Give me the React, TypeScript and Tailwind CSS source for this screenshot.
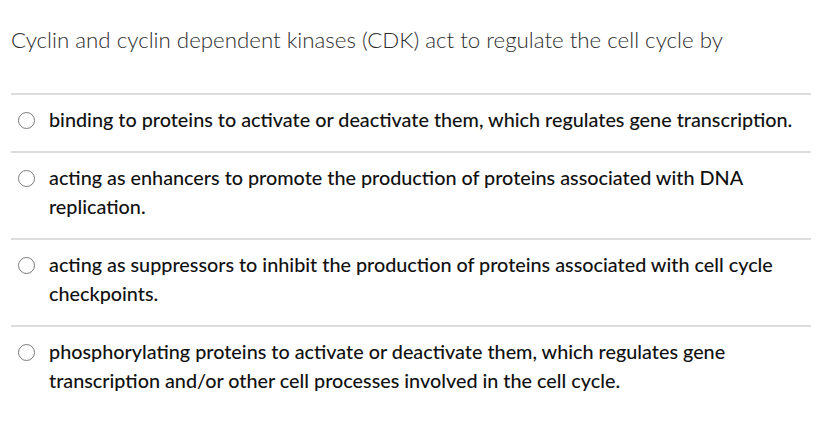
import React from 'react';

const options = [
  'binding to proteins to activate or deactivate them, which regulates gene transcription.',
  'acting as enhancers to promote the production of proteins associated with DNA replication.',
  'acting as suppressors to inhibit the production of proteins associated with cell cycle checkpoints.',
  'phosphorylating proteins to activate or deactivate them, which regulates gene transcription and/or other cell processes involved in the cell cycle.',
];

const App: React.FC = () => {
  return (
    <div className="min-h-screen bg-white" style={{ fontFamily: 'Lato, "Noto Sans", sans-serif' }}>
      <div className="ml-[11px] w-[800px]">
        <h1 className="pt-[24px] pb-[37px] text-[22.3px] leading-[32px] font-light text-[#2d2d2d]">
          Cyclin and cyclin dependent kinases (CDK) act to regulate the cell cycle by
        </h1>
        <div>
          {options.map((text) => (
            <label key={text} className="flex items-start border-t-2 border-[#dcdcdc] pt-[10px] pb-[16px] cursor-pointer">
              <span className="mt-[7px] ml-[7px] w-[17px] h-[17px] shrink-0 rounded-full border border-[#7a7a7a] bg-white" />
              <span className="ml-[14px] text-[19.8px] leading-[29.5px] font-medium text-[#111]">{text}</span>
            </label>
          ))}
        </div>
      </div>
    </div>
  );
};

export default App;
